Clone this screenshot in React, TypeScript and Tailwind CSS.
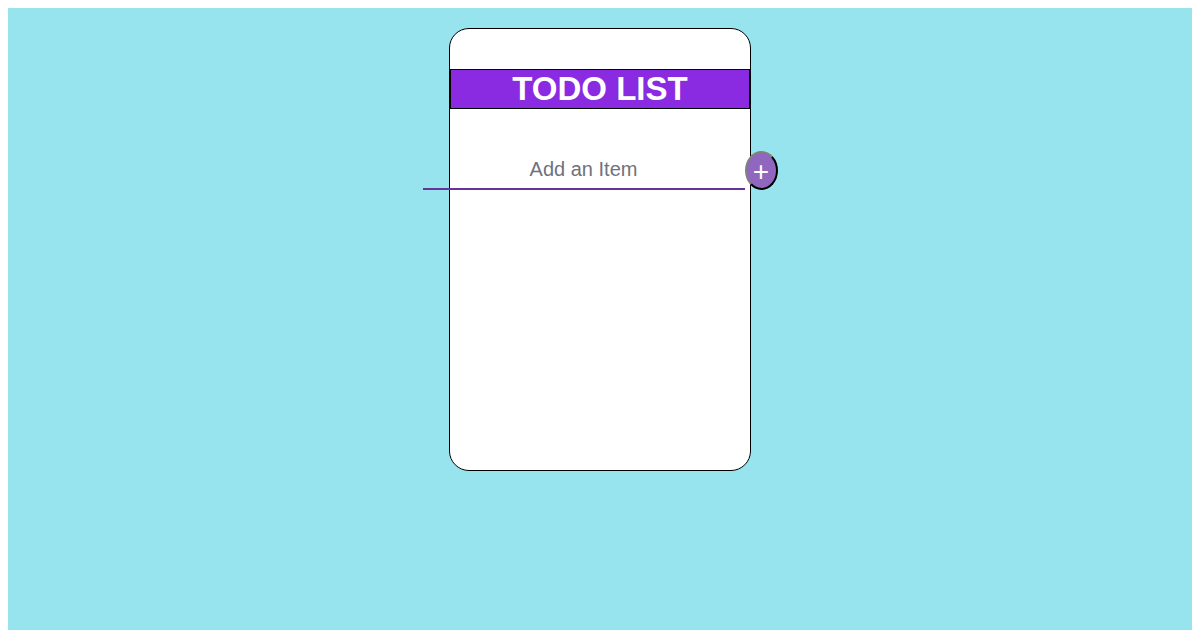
export default function App() {
  return (
    <div className="bg-white p-2 font-['Liberation_Sans',Arial,sans-serif]">
      <div className="min-h-[640px] bg-[#97e4ef] pt-5">
        <div className="mx-auto h-[443px] w-[302px] rounded-[20px] border border-black bg-white pt-10">
          <div className="h-10 border border-black bg-[#8a2be2] text-center text-[33px] font-bold leading-[38px] text-white">
            TODO LIST
          </div>
          <div className="mt-[42px] flex items-end justify-center">
            <input
              type="text"
              placeholder="Add an Item"
              className="w-[322px] shrink-0 border-b-2 border-[#663399] bg-transparent pb-[7px] text-center text-[20px] leading-[23px] text-black outline-none placeholder:text-[#6f727d]"
            />
            <button className="flex h-[39px] w-[33px] shrink-0 items-center justify-center rounded-[50%] border-2 border-t-[#808080] border-l-[#808080] border-r-black border-b-black bg-[#9166be] pt-[3px] text-[28px] font-light leading-none text-white">
              +
            </button>
          </div>
        </div>
      </div>
    </div>
  )
}
